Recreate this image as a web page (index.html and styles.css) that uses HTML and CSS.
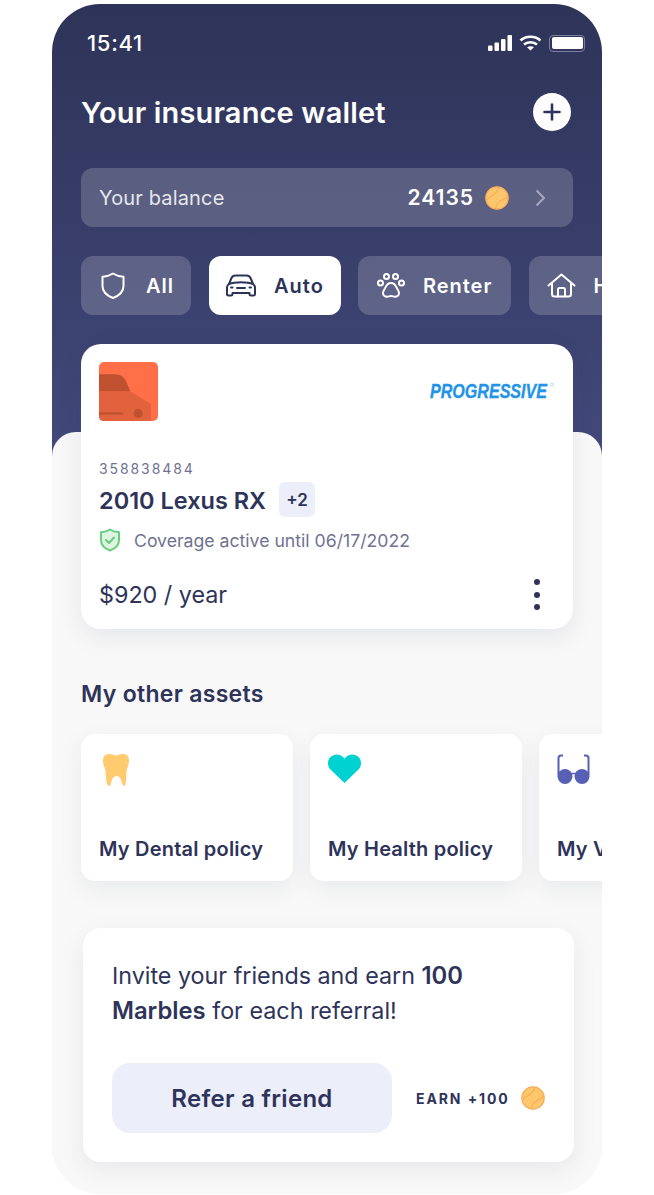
FILE: index.html
```html
<!DOCTYPE html>
<html lang="en">
<head>
    <meta charset="UTF-8">
    <meta name="viewport" content="width=device-width, initial-scale=1.0">
    <title>Your insurance wallet</title>
    <link rel="stylesheet" href="styles.css">
</head>
<body>
    <svg class="defs" width="0" height="0">
        <symbol id="coin" viewBox="0 0 24 24">
            <circle cx="12" cy="12" r="11.2" fill="#ffc76c" stroke="#f8ab5c" stroke-width="1.2"/>
            <path d="M13.500 1C14 5 11 7 8 9 5 10.500 3 12 1.500 14.500M23 9.500C22 12 19 13 16 14.500 13 16 11 19 10.500 23" fill="none" stroke="#f8ab5c" stroke-width="1.200"/>
        </symbol>
    </svg>

    <div class="phone">
        <div class="sheet"></div>
        <div class="content">
            <div class="status">
                <span class="time">15:41</span>
                <div class="status-icons">
                    <svg width="24" height="16" viewBox="0 0 24 16" fill="#fff">
                        <rect x="0" y="10.500" width="4.500" height="5.500" rx="1"/>
                        <rect x="6.500" y="7.500" width="4.500" height="8.500" rx="1"/>
                        <rect x="13" y="4" width="4.500" height="12" rx="1"/>
                        <rect x="19.500" y="0" width="4.500" height="16" rx="1"/>
                    </svg>
                    <svg width="23" height="16" viewBox="0 0 23 16" fill="none" stroke="#fff" stroke-width="2.600">
                        <path d="M1.500 5.500C7 .5 16 .5 21.500 5.500"/>
                        <path d="M5 9.500c3.500-3 9.500-3 13 0"/>
                        <path d="M11.500 15.500 8 12.300c2-1.500 5-1.500 7 0z" fill="#fff" stroke="none"/>
                    </svg>
                    <div class="battery"><span class="battery-level"></span></div>
                </div>
            </div>

            <div class="title-row">
                <h1>Your insurance wallet</h1>
                <button class="add-btn">
                    <svg width="20" height="20" viewBox="0 0 20 20" stroke="#2e3359" stroke-width="2.600" stroke-linecap="round">
                        <path d="M10 2.500v15M2.500 10h15"/>
                    </svg>
                </button>
            </div>

            <div class="balance">
                <span class="balance-label">Your balance</span>
                <span class="balance-value">24135</span>
                <svg class="coin" width="24" height="24"><use href="#coin"/></svg>
                <svg class="chevron" width="11" height="18" viewBox="0 0 11 18" fill="none" stroke="#a5a7bd" stroke-width="2">
                    <path d="M1.500 1.500 9 9l-7.500 7.500"/>
                </svg>
            </div>

            <div class="tabs">
                <div class="tab tab-all">
                    <svg class="icon-shield" width="24" height="27" viewBox="0 0 24 27" fill="none" stroke="#fff" stroke-width="2" stroke-linejoin="round">
                        <path d="M12 1.500c3 2 6.500 3 10.500 3.200V14c0 5.500-4 9.500-10.500 12C5.500 23.500 1.500 19.500 1.500 14V4.700C5.500 4.500 9 3.500 12 1.500z"/>
                    </svg>
                    <span>All</span>
                </div>
                <div class="tab tab-active">
                    <svg width="30" height="23" viewBox="0 0 30 23" fill="none" stroke="#2e3359" stroke-width="2" stroke-linecap="round" stroke-linejoin="round">
                        <path d="M3 10 5.500 4C6.300 2.200 7.500 1.500 9.500 1.500h11c2 0 3.200.7 4 2.500L27 10"/>
                        <path d="M3 10c-1.200.8-2 2-2 3.500V20c0 1 .6 1.500 1.500 1.500H5c1 0 1.500-.5 1.500-1.500v-1h17v1c0 1 .5 1.500 1.500 1.500h2.500c.9 0 1.500-.5 1.500-1.500v-6.500c0-1.500-.8-2.700-2-3.500-3-1.200-7-1.800-12-1.800S6 8.800 3 10z"/>
                        <path d="M11 14h8M5 13.500h1.500M23.500 13.500H25"/>
                    </svg>
                    <span>Auto</span>
                </div>
                <div class="tab">
                    <svg width="28" height="25" viewBox="0 0 28 25" fill="none" stroke="#fff" stroke-width="2">
                        <circle cx="9.500" cy="3.500" r="2.500"/>
                        <circle cx="18.500" cy="3.500" r="2.500"/>
                        <circle cx="3.500" cy="10" r="2.500"/>
                        <circle cx="24.500" cy="10" r="2.500"/>
                        <path d="M14 10c-3 0-4.500 2-5.500 4.500C7.500 16.500 6 18 6 20c0 2.500 2 3.800 4 3.800 1.500 0 2.500-.8 4-.8s2.500.8 4 .8c2 0 4-1.300 4-3.800 0-2-1.500-3.500-2.500-5.500C18.500 12 17 10 14 10z"/>
                    </svg>
                    <span>Renter</span>
                </div>
                <div class="tab tab-home">
                    <svg width="29" height="25" viewBox="0 0 29 25" fill="none" stroke="#fff" stroke-width="2" stroke-linecap="round" stroke-linejoin="round">
                        <path d="M1.500 12.500 14.500 1.500l13 11"/>
                        <path d="M5 10v11c0 1.500 1 2.500 2.500 2.500h14c1.500 0 2.500-1 2.500-2.500V10"/>
                        <path d="M11 23.500v-7c0-1 .5-1.500 1.500-1.500h4c1 0 1.500.5 1.500 1.500v7"/>
                    </svg>
                    <span>Home</span>
                </div>
            </div>

            <div class="policy-card">
                <div class="policy-top">
                    <svg class="car-logo" width="59" height="59" viewBox="0 0 58 58">
                        <rect width="58" height="58" rx="5" fill="#ff7049"/>
                        <path d="M0 12h16q8 0 11 8l4 9H0z" fill="#bf5130"/>
                        <path d="M0 29h31l20 12v17H5q-5 0-5-5z" fill="#e2623d"/>
                        <circle cx="38.500" cy="50.500" r="4.500" fill="#bf5130"/>
                        <rect y="49.500" width="24" height="2.200" fill="#bf5130"/>
                    </svg>
                    <svg class="brand" width="126" height="19" viewBox="0 0 126 19">
                        <text x="1" y="16" textLength="117" lengthAdjust="spacingAndGlyphs">PROGRESSIVE</text>
                        <circle cx="123" cy="2.500" r="1.500" fill="none" stroke="#9ccbf2" stroke-width=".7"/>
                    </svg>
                </div>
                <div class="policy-number">358838484</div>
                <div class="policy-name-row">
                    <span class="policy-name">2010 Lexus RX</span>
                    <span class="badge">+2</span>
                </div>
                <div class="coverage">
                    <svg width="22" height="24" viewBox="0 0 22 24" fill="#dff5e3" stroke="#69cd80" stroke-width="2" stroke-linejoin="round" stroke-linecap="round">
                        <path d="M11 1.500c2.500 1.700 5.500 2.500 9 2.800V12c0 4.800-3.500 8.500-9 10.500C5.500 20.500 2 16.800 2 12V4.300c3.500-.3 6.500-1.100 9-2.800z"/>
                        <path d="m7 12 3 3 5-5.500" fill="none"/>
                    </svg>
                    <span>Coverage active until 06/17/2022</span>
                </div>
                <div class="policy-bottom">
                    <span class="price">$920 / year</span>
                    <div class="dots"><i></i><i></i><i></i></div>
                </div>
            </div>

            <h2 class="section-title">My other assets</h2>

            <div class="assets">
                <div class="asset">
                    <svg class="icon-tooth" width="26" height="32" viewBox="0 0 26 32" fill="#ffcb6e">
                        <path d="M6 0c3 0 5 .8 7 1.800C15 .8 17 0 20 0c4 0 6 2.500 6 7 0 4-2 7-2.500 10-.2 4 0 15-2.500 15-3 0-1.500-10-7.500-10s-4.500 10-7.500 10C3 32 2.800 21 2.500 17 2 14 0 11 0 7 0 2.500 2 0 6 0z"/>
                    </svg>
                    <span>My Dental policy</span>
                </div>
                <div class="asset">
                    <svg width="33" height="29" viewBox="0 0 33 29" fill="#00d1d1">
                        <path d="M16.500 29 2.500 15.500C-1 12-.7 6 2.500 3c3.500-3.500 9.500-3.500 12.500 0l1.500 1.700L18 3c3-3.500 9-3.500 12.500 0 3.200 3 3.500 9 0 12.500z"/>
                    </svg>
                    <span>My Health policy</span>
                </div>
                <div class="asset">
                    <svg width="33" height="31" viewBox="0 0 33 31" fill="#5760b5">
                        <path d="M6 1.500H4C2.500 1.500 1.500 2.500 1.500 4v17M27 1.500h2c1.500 0 2.500 1 2.500 2.500v17" fill="none" stroke="#5760b5" stroke-width="2"/>
                        <circle cx="8" cy="22.500" r="7.500"/>
                        <circle cx="25" cy="22.500" r="7.500"/>
                        <path d="M14 19.500h5" stroke="#5760b5" stroke-width="1.500"/>
                    </svg>
                    <span>My Vision policy</span>
                </div>
            </div>

            <div class="invite">
                <p>Invite your friends and earn <b>100 Marbles</b> for each referral!</p>
                <div class="invite-row">
                    <button class="refer-btn">Refer a friend</button>
                    <span class="earn">EARN +100</span>
                    <svg class="coin" width="24" height="24"><use href="#coin"/></svg>
                </div>
            </div>
        </div>
    </div>
</body>
</html>
```

FILE: styles.css
```css
body {
    margin: 0;
    background-color: white;
    color: #2e3359;
    font-family: Inter, "Noto Sans", sans-serif;
}

h1, h2, p {
    margin: 0;
}

button {
    border: none;
    font-family: inherit;
    padding: 0;
}

.defs {
    display: block;
}

.phone {
    position: relative;
    width: 550px;
    height: 1190px;
    margin: 4px 0 0 52px;
    border-radius: 48px;
    overflow: hidden;
    background: #f7f7f7 linear-gradient(180deg, #2e3358 0%, #444a7c 100%) no-repeat;
    background-size: 100% 480px;
}

/* light panel behind the cards */
.sheet {
    position: absolute;
    top: 428px;
    left: 0;
    right: 0;
    bottom: 0;
    background-color: #f8f8f8;
    border-radius: 24px 24px 0 0;
}

.content {
    position: relative;
    padding: 0 29px;
}

.status {
    display: flex;
    justify-content: space-between;
    align-items: center;
    height: 30px;
    padding: 24px 6px 0;
    margin-bottom: 35px;
    color: white;
}

.time {
    font-size: 22px;
    font-weight: 500;
    letter-spacing: 0.7px;
}

.status-icons {
    display: flex;
    align-items: center;
    gap: 7px;
    margin-right: -18px;
}

.battery {
    width: 31px;
    height: 12px;
    padding: 1.5px;
    border: 1.5px solid #7b7f9d;
    border-radius: 4px;
}

.battery-level {
    display: block;
    height: 100%;
    background-color: white;
    border-radius: 2px;
}

.title-row {
    display: flex;
    justify-content: space-between;
    align-items: center;
    height: 38px;
    padding-right: 2px;
}

h1 {
    color: white;
    font-size: 29px;
    font-weight: 600;
    letter-spacing: 0.15px;
    padding-top: 1px;
}

.add-btn {
    display: flex;
    align-items: center;
    justify-content: center;
    width: 38px;
    height: 38px;
    background-color: white;
    border-radius: 50%;
}

.balance {
    display: flex;
    align-items: center;
    height: 59px;
    margin-top: 37px;
    padding: 0 27px 0 18px;
    background-color: rgba(255, 255, 255, 0.18);
    border-radius: 12px;
    color: white;
}

.balance-label {
    flex: 1;
    font-size: 20px;
    letter-spacing: 0.15px;
    opacity: 0.85;
}

.balance-value {
    font-size: 21px;
    font-weight: 600;
    letter-spacing: 1px;
}

.balance .coin {
    margin-left: 11px;
}

.chevron {
    margin-left: 26px;
}

.tabs {
    display: flex;
    gap: 18px;
    margin-top: 29px;
    margin-right: -200px;
}

.tab {
    display: flex;
    align-items: center;
    flex-shrink: 0;
    gap: 18px;
    height: 59px;
    padding: 0 19px;
    background-color: rgba(255, 255, 255, 0.18);
    border-radius: 12px;
    color: white;
    font-size: 20px;
    font-weight: 600;
    letter-spacing: 1px;
}

.tab-all {
    padding-right: 17px;
}

.icon-shield {
    margin: 0 3px 0 1px;
}

.tab-active {
    margin-right: -1px;
    padding: 0 17px;
    background-color: white;
    color: #2e3359;
}

.tab-home {
    gap: 17px;
    padding-left: 18px;
}

.policy-card {
    height: 285px;
    box-sizing: border-box;
    margin-top: 29px;
    padding: 18px 18px 0;
    background-color: white;
    border-radius: 20px;
    box-shadow: 0 8px 24px rgba(46, 51, 89, 0.09);
}

.policy-top {
    display: flex;
    justify-content: space-between;
    align-items: center;
}

.car-logo {
    display: block;
}

.brand text {
    fill: #2193e8;
    stroke: #2193e8;
    stroke-width: 0.3;
    font-family: "Liberation Sans", sans-serif;
    font-size: 20px;
    font-weight: 700;
    font-style: italic;
}

.policy-number {
    margin-top: 39px;
    color: #6f7391;
    font-size: 14px;
    line-height: 17px;
    letter-spacing: 1.9px;
}

.policy-name-row {
    display: flex;
    align-items: center;
    gap: 13px;
    margin-top: 5px;
}

.policy-name {
    padding-top: 2px;
    font-size: 23.500px;
    font-weight: 600;
}

.badge {
    display: flex;
    align-items: center;
    justify-content: center;
    width: 36px;
    height: 35px;
    background-color: #eceefa;
    border-radius: 6px;
    font-size: 17px;
    font-weight: 600;
}

.coverage {
    display: flex;
    align-items: center;
    gap: 13px;
    margin-top: 11px;
    color: #6f7391;
    font-size: 17.650px;
}

.policy-bottom {
    display: flex;
    justify-content: space-between;
    align-items: center;
    margin-top: 27px;
}

.price {
    font-size: 23.300px;
}

.dots {
    display: flex;
    flex-direction: column;
    gap: 6.500px;
    margin-right: 15px;
}

.dots i {
    display: block;
    width: 6px;
    height: 6px;
    background-color: #2e3359;
    border-radius: 50%;
}

.section-title {
    margin-top: 52px;
    font-size: 23px;
    font-weight: 600;
    letter-spacing: 0.3px;
    line-height: 27px;
}

.assets {
    display: flex;
    gap: 17px;
    margin-top: 26px;
    margin-right: -200px;
}

.asset {
    display: flex;
    flex-direction: column;
    justify-content: space-between;
    align-items: flex-start;
    flex-shrink: 0;
    width: 212px;
    height: 147px;
    box-sizing: border-box;
    padding: 20px 18px 20px;
    background-color: white;
    border-radius: 14px;
    box-shadow: 0 8px 24px rgba(46, 51, 89, 0.07);
    font-size: 20px;
    font-weight: 600;
    letter-spacing: 0.2px;
}

.icon-tooth {
    margin-left: 4px;
}

.invite {
    width: 491px;
    height: 234px;
    box-sizing: border-box;
    margin: 47px 0 0 2px;
    padding: 30px 29px 0;
    background-color: white;
    border-radius: 18px;
    box-shadow: 0 8px 24px rgba(46, 51, 89, 0.08);
}

.invite p {
    font-size: 23.300px;
    line-height: 35px;
}

.invite b {
    font-size: 23.800px;
    font-weight: 600;
}

.invite-row {
    display: flex;
    align-items: center;
    margin-top: 35px;
}

.refer-btn {
    width: 280px;
    height: 70px;
    background-color: #eceefa;
    border-radius: 18px;
    color: #2e3359;
    font-size: 24px;
    font-weight: 600;
    letter-spacing: 0.3px;
}

.earn {
    margin-left: 24px;
    font-size: 14px;
    font-weight: 700;
    letter-spacing: 1.900px;
}

.invite-row .coin {
    margin-left: 11px;
}
```
